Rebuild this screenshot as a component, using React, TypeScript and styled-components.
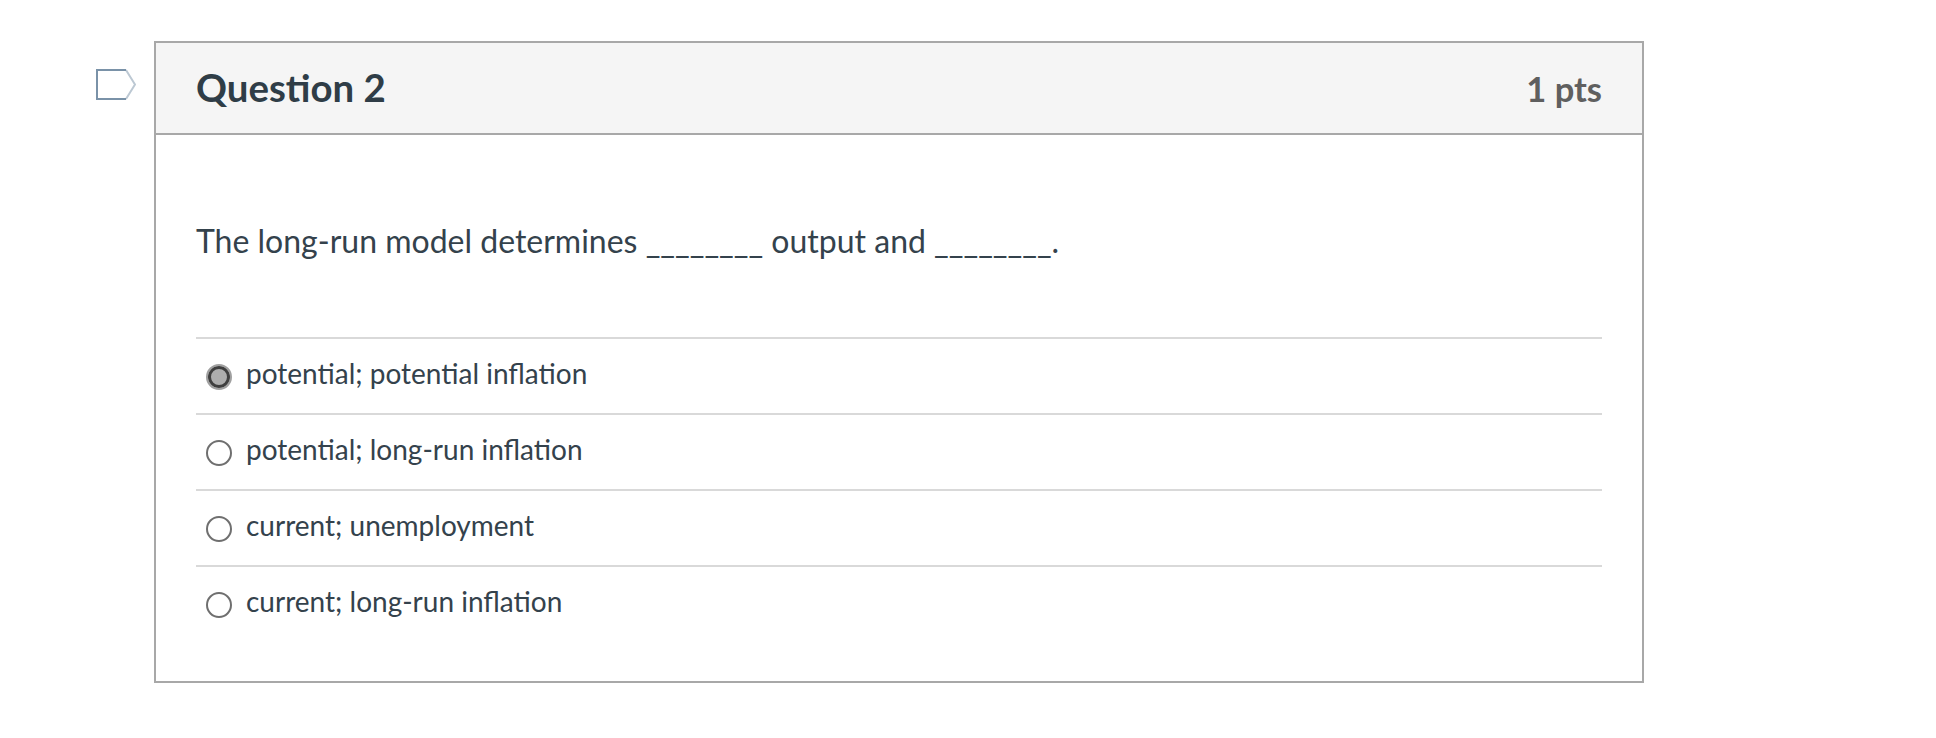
import { createGlobalStyle, styled } from 'styled-components';

const GlobalStyle = createGlobalStyle`
  html, body {
    margin: 0;
    background: #fff;
  }
  body {
    font-family: Lato, "Liberation Sans", sans-serif;
    font-feature-settings: 'liga' 1;
    color: #34424c;
  }
`;

const Page = styled.div`
  display: flex;
  align-items: flex-start;
  gap: 18px;
  padding: 41px 0 0 96px;
`;

const FlagMark = styled.svg`
  flex: none;
  width: 40px;
  height: 34px;
  margin-top: 27px;
`;

const Card = styled.section`
  width: 1490px;
  height: 642px;
  box-sizing: border-box;
  border: 2px solid #a8a8a8;
`;

const Header = styled.header`
  display: flex;
  align-items: center;
  justify-content: space-between;
  height: 92px;
  box-sizing: border-box;
  padding: 0 40px;
  background: #f5f5f5;
  border-bottom: 2px solid #a8a8a8;
`;

const Title = styled.h2`
  margin: 0 0 2px;
  font-size: 38.4px;
  font-weight: 700;
  color: #2f3d47;
`;

const Points = styled.div`
  font-size: 34.5px;
  font-weight: 700;
  color: #5f5f5f;
`;

const Body = styled.div`
  padding: 0 40px;
`;

const Prompt = styled.p`
  margin: 0;
  padding: 86px 0 76px;
  font-size: 32px;
  line-height: 40px;
`;

const Answer = styled.label`
  display: flex;
  align-items: center;
  height: 76px;
  box-sizing: border-box;
  border-top: 2px solid #d9d9d9;
  padding: 0 0 6px 10px;
  font-size: 28px;
`;

const Radio = styled.span<{ $selected?: boolean }>`
  flex: none;
  width: 26px;
  height: 26px;
  box-sizing: border-box;
  margin: 7px 14px 0 0;
  border-radius: 50%;
  border: 2px solid ${(p) => (p.$selected ? '#a0a0a0' : '#6f6f6f')};
  background: ${(p) => (p.$selected ? '#adadad' : '#fff')};
  box-shadow: ${(p) => (p.$selected ? 'inset 0 0 0 3px #3f3f3f' : 'none')};
`;

const answers = [
  'potential; potential inflation',
  'potential; long-run inflation',
  'current; unemployment',
  'current; long-run inflation',
];

const App = () => (
  <>
    <GlobalStyle />
    <Page>
      <FlagMark viewBox="0 0 40 34" aria-hidden="true">
        <path d="M30 2L39 16.5L30 31" fill="none" stroke="#bcc8d3" strokeWidth="2" />
        <path d="M30 2H1V31H30" fill="none" stroke="#7a92a8" strokeWidth="2" />
      </FlagMark>
      <Card>
        <Header>
          <Title>Question 2</Title>
          <Points>1 pts</Points>
        </Header>
        <Body>
          <Prompt>The long-run model determines ________ output and ________.</Prompt>
          {answers.map((a, i) => (
            <Answer key={a}>
              <Radio $selected={i === 0} />
              {a}
            </Answer>
          ))}
        </Body>
      </Card>
    </Page>
  </>
);

export default App;
